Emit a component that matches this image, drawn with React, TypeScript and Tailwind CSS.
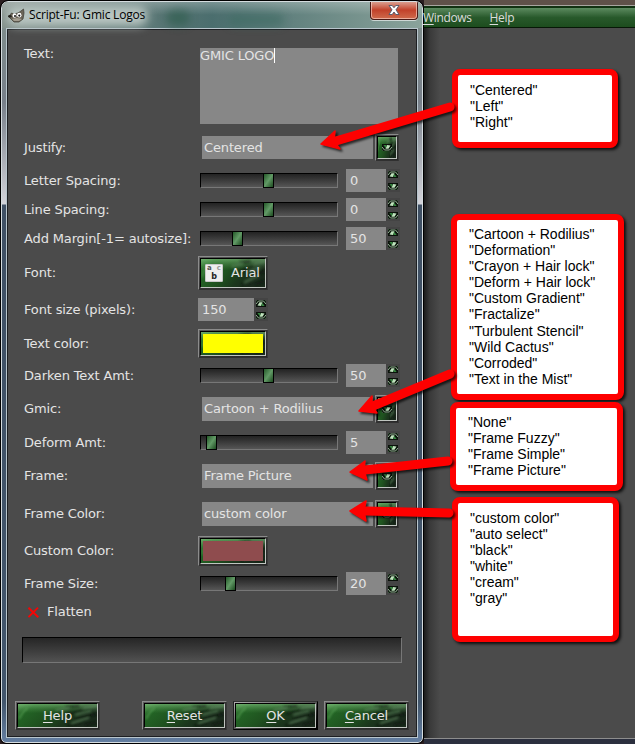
import type { ReactNode } from "react";

const LABEL_FONT = "font-['DejaVu_Sans',sans-serif] text-[13px] leading-4 tracking-[-0.14px] text-[#e4e4e4]";

function WilberIcon() {
  return (
    <svg width="17" height="15" viewBox="0 0 17 15">
      <path d="M2 7 3.5 5 6 6 10 5 13 3 15.5 1 16 5 15 11 11 14 6 14 3 11 1 9Z" fill="#6b6558" stroke="#45423a" strokeWidth="0.8" />
      <path d="M4 11 9 10 14 11 11 13 6 13Z" fill="#a39d90" />
      <ellipse cx="6.5" cy="7.5" rx="2" ry="2.2" fill="#fff" />
      <ellipse cx="11.3" cy="7.2" rx="2.2" ry="2.4" fill="#fff" />
      <circle cx="7" cy="8" r="1" fill="#111" />
      <circle cx="11.3" cy="7.6" r="1.1" fill="#111" />
      <ellipse cx="1.8" cy="8.3" rx="1.8" ry="1.3" fill="#26241f" />
    </svg>
  );
}

function GreenTexture() {
  return (
    <svg className="absolute inset-0 h-full w-full" viewBox="0 0 80 23" preserveAspectRatio="none">
      <defs>
        <linearGradient id="moss" x1="0" y1="0" x2="1" y2="0.35">
          <stop offset="0" stopColor="#478a45" />
          <stop offset="0.2" stopColor="#236425" />
          <stop offset="0.5" stopColor="#1f511f" />
          <stop offset="0.75" stopColor="#1b361c" />
          <stop offset="1" stopColor="#1a2a1c" />
        </linearGradient>
        <linearGradient id="mossTop" x1="0" y1="0" x2="0" y2="1">
          <stop offset="0" stopColor="#8fd08c" stopOpacity="0.55" />
          <stop offset="0.4" stopColor="#5b9d58" stopOpacity="0" />
        </linearGradient>
        <filter id="soft">
          <feGaussianBlur stdDeviation="1.3" />
        </filter>
      </defs>
      <rect width="80" height="23" fill="url(#moss)" />
      <rect width="80" height="23" fill="url(#mossTop)" />
      <g fill="none" filter="url(#soft)" opacity="0.65">
        <path d="M48 3 62 2M50 10 66 7M58 15 80 10M50 22 64 18M68 21 80 18" stroke="#0b150c" strokeWidth="2.2" />
        <path d="M38 6 52 4M58 11 74 7M54 19 72 14M66 4 80 2" stroke="#6a966b" strokeWidth="1.4" />
        <path d="M1 15C4 10 5 7 10 4" stroke="#5aa056" strokeWidth="2" />
      </g>
    </svg>
  );
}

interface BevelProps {
  className: string;
  focused?: boolean;
  children?: ReactNode;
}

function Bevel({ className, focused, children }: BevelProps) {
  return (
    <div
      className={`shrink-0 border p-px ${
        focused
          ? "border-t-[#333] border-l-[#222] border-r-black border-b-black bg-gradient-to-br from-[#b0b0b0] via-[#555] to-black"
          : "border-t-[#8c8c8c] border-l-[#8c8c8c] border-r-[#3a3a3a] border-b-[#303030] bg-gradient-to-br from-[#5c5c5c] via-[#333] to-[#262626]"
      } ${className}`}
    >
      <div className="relative flex h-full w-full items-center justify-center overflow-hidden border border-t-black border-l-black border-r-[#c0c5c0] border-b-[#c0c5c0] bg-[#1b401b]">
        <GreenTexture />
        {children}
      </div>
    </div>
  );
}

function PushButton({ mnemonic, rest, className, focused }: { mnemonic: string; rest: string; className: string; focused?: boolean }) {
  return (
    <Bevel focused={focused} className={`h-[29px] w-[85px] ${className}`}>
      <span className={`relative ${LABEL_FONT}`}>
        <span className="underline underline-offset-2">{mnemonic}</span>
        {rest}
      </span>
    </Bevel>
  );
}

function ArrowGlyph({ down }: { down?: boolean }) {
  return (
    <svg width="10" height="7" viewBox="0 0 10 7" className={down ? "rotate-180" : ""}>
      <rect width="10" height="7" fill="#0b120b" />
      <path d="M0 4 2.5 1H7.5L10 4" fill="none" stroke="#93b394" strokeWidth="1" />
      <path d="M1.5 5.5 3.5 2.2H6.5L5 6Z" fill="#bfe3bd" />
      <path d="M6 2.5 8.7 6H5.5Z" fill="#35853e" />
      <path d="M0 0H1.5L0 1.5ZM10 0H8.5L10 1.5Z" fill="#3d5a3f" />
    </svg>
  );
}

function SpinBox({ value, wide }: { value: string; wide?: boolean }) {
  return (
    <div className="flex h-[23px] shrink-0">
      <div className={`flex items-center bg-[#878787] pl-1 ${wide ? "w-14" : "w-10"} ${LABEL_FONT}`}>{value}</div>
      <div className="flex w-3.5 flex-col items-center justify-between bg-[#444] py-0.5">
        <ArrowGlyph />
        <ArrowGlyph down />
      </div>
    </div>
  );
}

function SliderRow({ value, offset }: { value: string; offset: number }) {
  return (
    <>
      <div className="ml-0.5 mr-2 h-[15px] w-[138px] border border-t-black border-l-black border-r-[#777] border-b-[#777] bg-gradient-to-b from-[#232323] to-[#565656]">
        <div
          className="-mt-px h-[15px] w-[11px] border border-black bg-gradient-to-br from-[#255a2a] via-[#629a66] to-[#1c4a20]"
          style={{ marginLeft: offset }}
        />
      </div>
      <SpinBox value={value} />
    </>
  );
}

function Combo({ value, tall }: { value: string; tall?: boolean }) {
  return (
    <>
      <div className={`ml-1 mr-0.5 flex w-[171px] items-center bg-[#878787] pl-0.5 ${tall ? "h-6" : "h-[23px]"} ${LABEL_FONT}`}>
        {value}
      </div>
      <Bevel className="h-full w-6">
        <div className="relative">
          <ArrowGlyph down />
        </div>
      </Bevel>
    </>
  );
}

function Row({ label, className, children }: { label: string; className: string; children: ReactNode }) {
  return (
    <div className={`flex items-center ${className}`}>
      <div className={`w-[174px] shrink-0 whitespace-nowrap ${LABEL_FONT}`}>{label}</div>
      {children}
    </div>
  );
}

function FontButton() {
  return (
    <Bevel className="h-[34px] w-[70px]">
      <div className="relative flex w-full items-center gap-2 pl-1">
        <div className="flex h-[18px] w-[18px] flex-col items-center justify-between rounded-[1px] border border-[#c8c8c8] bg-[#eee] font-['DejaVu_Sans',sans-serif] font-bold">
          <div className="flex w-full justify-between px-px text-[7px] leading-[6px]">
            <span className="text-[#555]">a</span>
            <span className="text-[#999]">c</span>
          </div>
          <span className="text-[8px] leading-[8px] text-[#222]">b</span>
        </div>
        <span className={LABEL_FONT}>Arial</span>
      </div>
    </Bevel>
  );
}

function ColorButton({ height, swatch }: { height: string; swatch: string }) {
  return (
    <Bevel className={`w-[70px] ${height}`}>
      <div className={`absolute bottom-0.5 left-0.5 right-0.5 top-0.5 ${swatch}`} />
    </Bevel>
  );
}

function TitleBar() {
  return (
    <div className="relative flex h-[26px] items-start bg-gradient-to-r from-[#84918c] via-[#4b6e6e] to-[#8aa39b]">
      <div className="absolute inset-0 bg-gradient-to-b from-white/25 via-transparent to-transparent" />
      <div className="absolute left-1 top-1 h-5 w-[142px] rounded-full bg-[#b9c6c2] blur-[5px]" />
      <div className="absolute left-[164px] top-2 h-4 w-6 rounded-full bg-[#2b5b4a] opacity-60 blur-[4px]" />
      <div className="absolute left-[226px] top-3 h-3 w-14 rounded-full bg-[#3d6b62] opacity-60 blur-[4px]" />
      <div className="relative flex flex-1 items-center gap-1 pl-1.5 pt-1">
        <WilberIcon />
        <span className="whitespace-nowrap font-['Open_Sans',sans-serif] text-[12px] leading-[18px] tracking-[-0.2px] text-black">
          Script-Fu: Gmic Logos
        </span>
      </div>
      <div className="relative -mt-px mr-1 flex h-[19px] w-12 items-center justify-center rounded-b border border-t-0 border-[#4a1a16] bg-gradient-to-b from-[#dba79a] via-[#c2412a] to-[#cf6a4c] shadow-[inset_0_0_0_1px_rgba(255,220,210,0.6),0_1px_0_rgba(255,255,255,0.6)]">
        <svg width="12" height="10" viewBox="0 0 13 11">
          <path d="M1 .5H4.5L6.5 3 8.5.5H12L8.7 5.3 12 10.5H8.5L6.5 7.7 4.5 10.5H1L4.3 5.3Z" fill="#fff" stroke="#4b5468" />
        </svg>
      </div>
    </div>
  );
}

function Dialog() {
  return (
    <div className="flex h-[744px] w-[424px] shrink-0 flex-col overflow-hidden rounded-t-lg rounded-b-md border border-black">
      <div className="flex h-full flex-col overflow-hidden rounded-t-[7px] rounded-b-[5px] border border-[#d5dcdf] bg-[linear-gradient(to_bottom,#80908c_0,#777f89_100px,#d2d3d9_202px,#3f5064_203px,#42566c_700px,#6681a4_742px)]">
        <TitleBar />
        <div className="mx-1 mb-1 flex-1 border border-[#b9c6cd]">
          <div className="h-full border border-[#1d1f22] bg-[#4b4b4b] pt-[18px]">
            <div className="pl-4">
              <div className="flex h-[76px]">
                <div className={`-mt-0.5 w-44 shrink-0 ${LABEL_FONT}`}>Text:</div>
                <div className={`w-[198px] bg-[#878787] ${LABEL_FONT}`}>
                  <span className="inline-block h-[15px] border-r border-white">GMIC LOGO</span>
                </div>
              </div>
              <Row label="Justify:" className="mt-2.5 h-[27px]"><Combo value="Centered" /></Row>
              <Row label="Letter Spacing:" className="mt-2 h-[23px]"><SliderRow value="0" offset={62} /></Row>
              <Row label="Line Spacing:" className="mt-1.5 h-[23px]"><SliderRow value="0" offset={62} /></Row>
              <Row label="Add Margin[-1= autosize]:" className="mt-1.5 h-[23px]"><SliderRow value="50" offset={31} /></Row>
              <Row label="Font:" className="mt-1.5 h-[34px]"><FontButton /></Row>
              <Row label="Font size (pixels):" className="mt-2 h-[23px]"><SpinBox value="150" wide /></Row>
              <Row label="Text color:" className="mt-2 h-[29px]"><ColorButton height="h-[29px]" swatch="bg-[#ffff00]" /></Row>
              <Row label="Darken Text Amt:" className="mt-1.5 h-[23px]"><SliderRow value="50" offset={62} /></Row>
              <Row label="Gmic:" className="mt-2 h-7"><Combo value="Cartoon + Rodilius" tall /></Row>
              <Row label="Deform Amt:" className="mt-2 h-[23px]"><SliderRow value="5" offset={5} /></Row>
              <Row label="Frame:" className="mt-2 h-7"><Combo value="Frame Picture" tall /></Row>
              <Row label="Frame Color:" className="mt-2.5 h-7"><Combo value="custom color" tall /></Row>
              <Row label="Custom Color:" className="mt-2 h-[30px]"><ColorButton height="h-[30px]" swatch="bg-[#8f4c4e]" /></Row>
              <Row label="Frame Size:" className="mt-1.5 h-[23px]"><SliderRow value="20" offset={24} /></Row>
              <div className="mt-2 flex h-[17px] items-center gap-2 pl-1">
                <svg width="11" height="11" viewBox="0 0 11 11" className="mt-px">
                  <path d="M.5.8 10.3 10.3M10 .7.5 10.2" stroke="#f50505" strokeWidth="1.9" />
                </svg>
                <span className={LABEL_FONT}>Flatten</span>
              </div>
            </div>
            <div className="ml-3.5 mt-[17px] h-[26px] w-[380px] border border-t-black border-l-black border-r-[#777] border-b-[#777] bg-gradient-to-b from-[#262626] to-[#525252]" />
            <div className="mt-[38px] flex pl-[7px]">
              <PushButton mnemonic="H" rest="elp" className="mr-[42px]" />
              <PushButton mnemonic="R" rest="eset" className="mr-1.5" />
              <PushButton mnemonic="O" rest="K" focused className="mr-1.5" />
              <PushButton mnemonic="C" rest="ancel" className="" />
            </div>
          </div>
        </div>
      </div>
    </div>
  );
}

function Callout({ lines, className }: { lines: string[]; className: string }) {
  return (
    <div
      className={`rounded-lg border-[6px] border-[#fe0000] bg-white pl-3 font-['Liberation_Sans',Arial,sans-serif] text-[14px] leading-[16.1px] text-black shadow-[2px_2px_3px_rgba(0,0,0,0.8)] ${className}`}
    >
      {lines.map((line) => (
        <div key={line} className="whitespace-nowrap">{`"${line}"`}</div>
      ))}
    </div>
  );
}

const GMIC_MODES = [
  "Cartoon + Rodilius",
  "Deformation",
  "Crayon + Hair lock",
  "Deform + Hair lock",
  "Custom Gradient",
  "Fractalize",
  "Turbulent Stencil",
  "Wild Cactus",
  "Corroded",
  "Text in the Mist",
];

function MainWindow() {
  return (
    <div className="flex flex-1 flex-col bg-[#4b4b4b]">
      <div className="h-[5px] bg-[#5f5149]" />
      <div className="h-px bg-[#a8a5a0]" />
      <div className="flex h-[22px] gap-[18px] border-t-2 border-b border-t-[#123212] border-b-[#071807] bg-gradient-to-b from-[#5c8b60] via-[#28592b] to-[#1d4d1e] pt-0.5 font-['Open_Sans',sans-serif] text-[12px] leading-4 tracking-[-0.35px] text-[#dcdcdc]">
        <span className="-ml-px"><span className="underline underline-offset-2">W</span>indows</span>
        <span><span className="underline underline-offset-2">H</span>elp</span>
      </div>
      <div className="flex flex-1 flex-col bg-[linear-gradient(to_right,#1c1c1c_0,#3a3a3a_6px,#4b4b4b_16px)] pl-[26px]">
        <Callout className="ml-0.5 mt-[41px] h-[79px] w-[166px] pt-[7px]" lines={["Centered", "Left", "Right"]} />
        <Callout className="ml-px mt-[66px] h-[186px] w-[173px] pt-[6px]" lines={GMIC_MODES} />
        <Callout className="mt-0.5 h-[89px] w-[173px] pt-[6px]" lines={["None", "Frame Fuzzy", "Frame Simple", "Frame Picture"]} />
        <Callout
          className="ml-0.5 mt-1.5 h-[145px] w-[167px] pt-[7px]"
          lines={["custom color", "auto select", "black", "white", "cream", "gray"]}
        />
      </div>
      <div className="h-1.5 border-t border-[#8d8d8d] bg-[#2b2f3e]" />
    </div>
  );
}

// Pointers run from each callout to the control whose options it lists.
function Arrows() {
  return (
    <svg className="pointer-events-none absolute left-0 top-0" width="635" height="744" viewBox="0 0 635 744">
      <g className="drop-shadow-[2px_2px_1px_rgba(0,0,0,0.7)]" fill="#fe0000" stroke="#fe0000" strokeLinecap="round" strokeLinejoin="round">
        <path d="M450 107 336 141" strokeWidth="9" />
        <path d="M321 144 335 131 334 141 340 149Z" strokeWidth="1.5" />
        <path d="M450 374 373 406" strokeWidth="9" />
        <path d="M359 411 372 396 372 406 377 413Z" strokeWidth="1.5" />
        <path d="M448 461 365 470" strokeWidth="9" />
        <path d="M350 472 365 461 364 470 367 480Z" strokeWidth="1.5" />
        <path d="M449 513 365 511" strokeWidth="9" />
        <path d="M350 511 366 501 364 511 366 521Z" strokeWidth="1.5" />
      </g>
    </svg>
  );
}

export default function App() {
  return (
    <div className="relative flex h-[744px] w-[635px] overflow-hidden bg-[#2a1e20]">
      <Dialog />
      <MainWindow />
      <Arrows />
    </div>
  );
}
